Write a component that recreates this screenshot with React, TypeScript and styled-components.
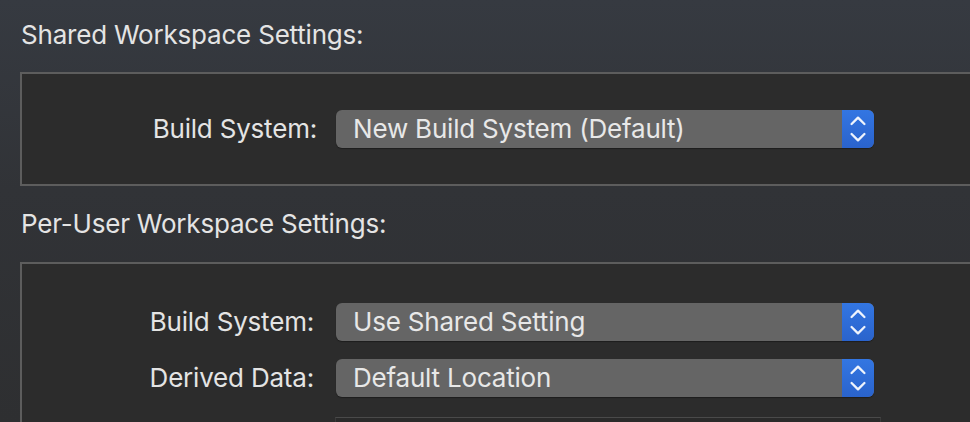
import styled, { createGlobalStyle } from "styled-components"

const GlobalStyle = createGlobalStyle`
  html, body {
    margin: 0;
    padding: 0;
    background: #2f3033;
  }
`

const Page = styled.div`
  height: 422px;
  overflow: hidden;
  padding-left: 20px;
  background: linear-gradient(180deg, #363a41 0%, #313337 45%, #2e2f31 100%);
  font-family: Inter, "Open Sans", sans-serif;
  color: #e4e4e4;
  box-sizing: border-box;
  letter-spacing: -0.2px;
`

const Heading = styled.div<{ $top: number }>`
  margin-top: ${(p) => p.$top}px;
  padding-left: 1px;
  font-size: 26px;
  line-height: 32px;
  height: 32px;
`

const Box = styled.div<{ $top: number; $pad: string; $height?: number }>`
  margin-top: ${(p) => p.$top}px;
  width: 1000px;
  ${(p) => (p.$height ? `height: ${p.$height}px;` : "")}
  box-sizing: border-box;
  border: 2px solid #5d5d5d;
  background: #2c2c2c;
  padding: ${(p) => p.$pad};
  display: flex;
  flex-direction: column;
  gap: 18px;
`

const Row = styled.div<{ $gap: number }>`
  display: grid;
  grid-template-columns: ${(p) => 314 - p.$gap}px 538px;
  column-gap: ${(p) => p.$gap}px;
  align-items: center;
`

const Label = styled.div`
  text-align: right;
  font-size: 26px;
  line-height: 32px;
  white-space: nowrap;
`

const Popup = styled.div`
  height: 38px;
  border-radius: 6px;
  background: #656565;
  display: flex;
  overflow: hidden;
  box-shadow: 0 1px 1px rgba(0, 0, 0, 0.35);
`

const PopupText = styled.div`
  flex: 1;
  padding-left: 17px;
  font-size: 26px;
  line-height: 38px;
  color: #e8e8e8;
  white-space: nowrap;
`

const Stepper = styled.div`
  width: 32px;
  background: linear-gradient(180deg, #3376e2 0%, #2a63cc 100%);
  display: flex;
  align-items: center;
  justify-content: center;
`

const Field = styled.div`
  margin-left: 313px;
  width: 544px;
  height: 38px;
  margin-top: 2px;
  border-top: 1px solid #4a4a4a;
  border-left: 1px solid #3a3a3a;
  border-right: 1px solid #3a3a3a;
  background: #2a2a2a;
`

function Chevrons() {
  return (
    <svg width="16" height="26" viewBox="0 0 16 26" fill="none">
      <path d="M1.6 8 L8 1.6 L14.4 8" stroke="#ffffff" strokeWidth="2.3" strokeLinecap="round" strokeLinejoin="round" opacity="0.92" />
      <path d="M1.6 18 L8 24.4 L14.4 18" stroke="#ffffff" strokeWidth="2.3" strokeLinecap="round" strokeLinejoin="round" opacity="0.92" />
    </svg>
  )
}

type selectProps = {
  label: string
  value: string
  gap: number
}

function SelectRow(props: selectProps) {
  return (
    <Row $gap={props.gap}>
      <Label>{props.label}</Label>
      <Popup>
        <PopupText>{props.value}</PopupText>
        <Stepper>
          <Chevrons />
        </Stepper>
      </Popup>
    </Row>
  )
}

export default function App() {
  return (
    <>
      <GlobalStyle />
      <Page>
        <Heading $top={19}>Shared Workspace Settings:</Heading>
        <Box $top={21} $pad="36px 0 36px 0" $height={114}>
          <SelectRow label="Build System:" value="New Build System (Default)" gap={19} />
        </Box>
        <Heading $top={22}>Per-User Workspace Settings:</Heading>
        <Box $top={22} $pad="39px 0 0 0" $height={200}>
          <SelectRow label="Build System:" value="Use Shared Setting" gap={22} />
          <SelectRow label="Derived Data:" value="Default Location" gap={22} />
          <Field />
        </Box>
      </Page>
    </>
  )
}
